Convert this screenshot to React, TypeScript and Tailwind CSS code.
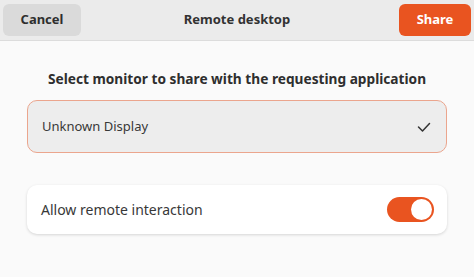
import React from "react";

export default function App() {
  return (
    <div
      className="w-[474px] h-[277px] bg-[#fafafa] flex flex-col text-[#323232]"
      style={{ fontFamily: '"Noto Sans", "DejaVu Sans", sans-serif' }}
    >
      <div className="h-[41px] bg-[#ebebeb] border-b border-[#dcdcdc] flex items-center justify-between px-[3px] relative">
        <button className="w-[78px] h-[32px] rounded-[6px] bg-[#dadada] text-[13px] font-bold text-[#2e2e2e]">
          Cancel
        </button>
        <div className="absolute left-0 right-0 text-center text-[13px] font-bold pointer-events-none">
          Remote desktop
        </div>
        <button className="w-[72px] h-[32px] rounded-[6px] bg-[#e95420] text-[13px] font-bold text-white">
          Share
        </button>
      </div>
      <div className="flex flex-col px-[27px] pt-[27px]">
        <div className="text-center text-[13.7px] font-bold text-[#2e2e2e] leading-[22px]">
          Select monitor to share with the requesting application
        </div>
        <div className="mt-[10px] h-[53px] rounded-[10px] border-[1.5px] border-[#eba58d] bg-[#ededed] flex items-center justify-between pl-[14px] pr-[14px]">
          <span className="text-[13px] text-[#383838]">Unknown Display</span>
          <svg width="16" height="16" viewBox="0 0 16 16" fill="none">
            <path d="M2.5 8 L6.5 12 L13.5 4.5" stroke="#333" strokeWidth="1.5" strokeLinecap="round" strokeLinejoin="round" />
          </svg>
        </div>
        <div className="mt-[32px] h-[49px] rounded-[10px] bg-white shadow-[0_1px_3px_rgba(0,0,0,0.15)] flex items-center justify-between pl-[14px] pr-[13px]">
          <span className="text-[14px] text-[#383838]">Allow remote interaction</span>
          <div className="w-[47px] h-[25px] rounded-full bg-[#e95420] relative">
            <div className="absolute right-[2px] top-[2px] w-[21px] h-[21px] rounded-full bg-white" />
          </div>
        </div>
      </div>
    </div>
  );
}
